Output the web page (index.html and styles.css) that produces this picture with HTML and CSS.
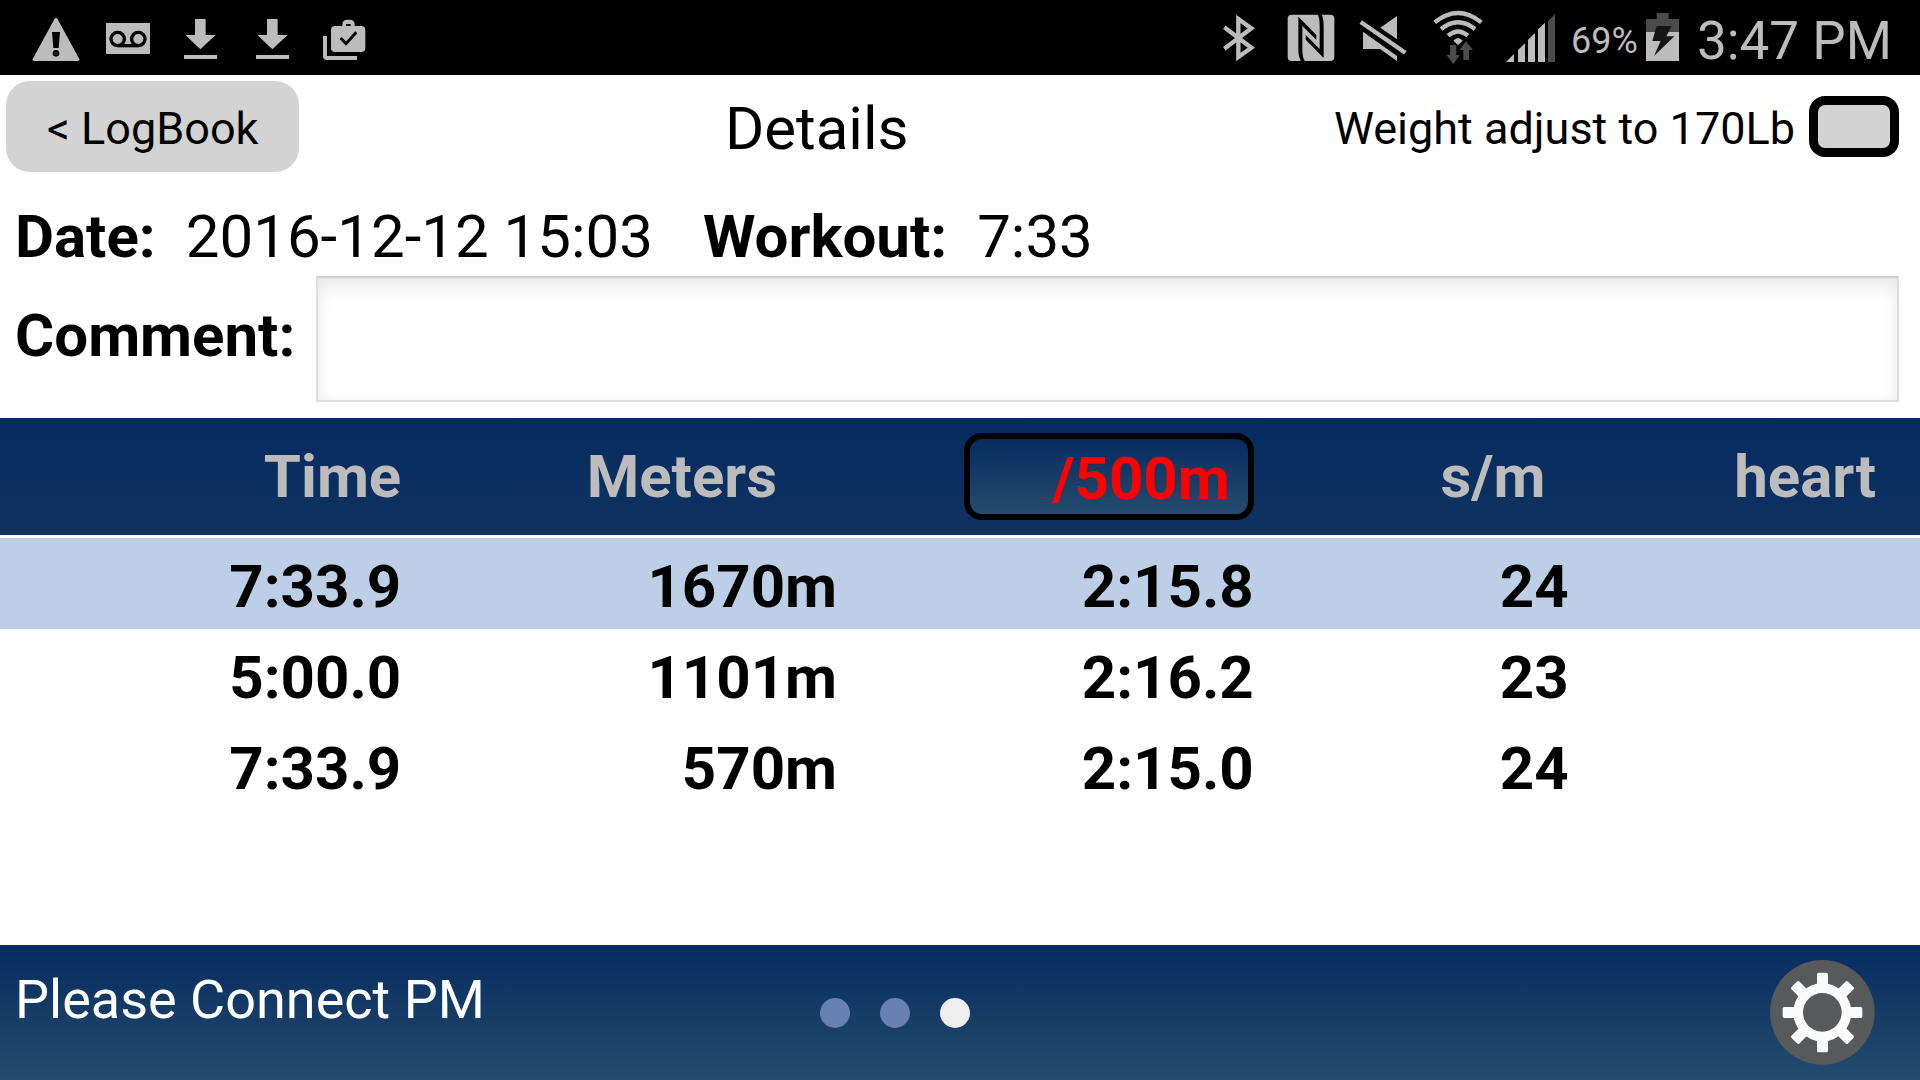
FILE: index.html
```html
<!DOCTYPE html>
<html lang="en">
<head>
<meta charset="utf-8">
<meta name="viewport" content="width=device-width, initial-scale=1">
<title>Details</title>
<link rel="stylesheet" href="styles.css">
</head>
<body>
<div class="status-bar">
  <div class="status-group">
    <svg class="status-icon" viewBox="60 0 216 225" aria-hidden="true">
      <path class="lit" d="M168 54q3 0 5 4l65 119q2 6-4 6H102q-6 0-4-6l65-119q2-4 5-4z"/>
      <path d="M156 96h24l-4 48h-16z"/><circle cx="168" cy="160" r="10"/>
    </svg>
    <svg class="status-icon" viewBox="276 0 216 225" aria-hidden="true">
      <path class="lit" d="M318 69h132v93H318z"/>
      <g fill="none" stroke="#000" stroke-width="10"><circle cx="353" cy="117" r="20"/><circle cx="415" cy="117" r="20"/><path d="M353 137h62"/></g>
    </svg>
    <svg class="status-icon" viewBox="492 0 216 225" aria-hidden="true">
      <path class="lit" d="M585 57h32v48h30l-46 43-45-43h29zM552 165h99v12h-99z"/>
    </svg>
    <svg class="status-icon" viewBox="708 0 216 225" aria-hidden="true">
      <path class="lit" d="M801 57h32v48h30l-46 43-45-43h29zM768 165h99v12h-99z"/>
    </svg>
    <svg class="status-icon" viewBox="924 0 216 225" aria-hidden="true">
      <rect class="lit" x="993" y="78" width="103" height="78" rx="12"/>
      <path class="lit" d="M1027 80v-6q0-15 15-15h7q15 0 15 15v6h-12v-8h-14v8z"/>
      <path class="lit" d="M969 108h12v60h90v12h-90q-12 0-12-12z"/>
      <path d="M1022 114l16 17 31-34" fill="none" stroke="#000" stroke-width="9"/>
    </svg>
  </div>
  <div class="status-group">
    <svg class="status-icon" viewBox="6 0 216 225" aria-hidden="true">
      <path d="M70 82l81 61-39 28V57l39 28-81 61" fill="none" stroke="#bcbcbc" stroke-width="13"/>
    </svg>
    <svg class="status-icon" viewBox="222 0 216 225" aria-hidden="true">
      <rect class="lit" x="260" y="44" width="140" height="139" rx="12"/>
      <path d="M292 50l54 55v15l-42-43v71q0 26 8 36h-12q-8-14-8-38zM368 174l-54-55v-15l42 43V76q0-26-8-36h12q8 14 8 38z"/>
    </svg>
    <svg class="status-icon" viewBox="438 0 216 225" aria-hidden="true">
      <path class="lit" d="M588 48v70l-50-35zM486 95l102 73v15l-51-36h-51z"/>
      <path d="M479 66l134 92" fill="none" stroke="#bcbcbc" stroke-width="13"/>
    </svg>
    <svg class="status-icon" viewBox="654 0 216 225" aria-hidden="true">
      <g fill="none" stroke="#bcbcbc" stroke-width="13"><path d="M701 67q70-56 140 0M720 87q51-41 102 0M741 107q30-25 60 0"/></g>
      <path class="lit" d="M757 122q14-16 28 0l-14 13z"/>
      <path d="M747 135h19v30h11l-20 27-21-27h11zM787 180v-30h-12l20-26 21 26h-12v30z" fill="#4b4b4b"/>
    </svg>
    <svg class="status-icon" viewBox="870 0 216 225" aria-hidden="true">
      <path class="lit" d="M915 186l24-24v24zM951 150l21-20v56h-21zM981 119l21-20v87h-21zM1011 88l21-20v118h-21z"/>
      <path d="M1041 63l21-21v144h-21z" fill="#4b4b4b"/>
    </svg>
    <span class="battery-level">69%</span>
    <svg class="battery-icon" viewBox="288 0 99 225" aria-hidden="true">
      <path d="M320 39h36v18h31v39h-99V57h32z" fill="#4b4b4b"/>
      <path class="lit" d="M288 96h99v87h-99z"/>
      <path d="M320 78h45l-16 31h24l-61 59 20-45h-25z" fill="#151515"/>
    </svg>
    <span class="clock">3:47 PM</span>
  </div>
</div>

<header class="title-bar">
  <button class="back-button" type="button">&lt; LogBook</button>
  <h1 class="title">Details</h1>
  <div class="weight-adjust">
    <label class="weight-label" for="weight">Weight adjust to 170Lb</label>
    <input class="weight-box" type="checkbox" id="weight">
  </div>
</header>

<main class="content">
  <dl class="summary">
    <div class="summary-item"><dt>Date:</dt><dd>2016-12-12 15:03</dd></div>
    <div class="summary-item"><dt>Workout:</dt><dd>7:33</dd></div>
  </dl>
  <div class="comment-row">
    <label class="comment-label" for="comment">Comment:</label>
    <input class="comment-input" type="text" id="comment">
  </div>

  <table class="splits">
    <colgroup>
      <col class="col-time"><col class="col-meters"><col class="col-pace"><col class="col-rate"><col>
    </colgroup>
    <thead>
      <tr>
        <th scope="col">Time</th>
        <th class="head-meters" scope="col">Meters</th>
        <th scope="col"><button class="pace-button" type="button">/500m</button></th>
        <th class="head-rate" scope="col">s/m</th>
        <th class="head-heart" scope="col">heart</th>
      </tr>
    </thead>
    <tbody>
      <tr class="total"><td>7:33.9</td><td>1670m</td><td>2:15.8</td><td>24</td><td></td></tr>
      <tr><td>5:00.0</td><td>1101m</td><td>2:16.2</td><td>23</td><td></td></tr>
      <tr><td>7:33.9</td><td>570m</td><td>2:15.0</td><td>24</td><td></td></tr>
    </tbody>
  </table>
</main>

<footer class="footer">
  <p class="connection">Please Connect PM</p>
  <div class="pager">
    <span class="dot"></span><span class="dot"></span><span class="dot dot-current"></span>
  </div>
  <button class="settings" type="button" aria-label="Settings">
    <svg class="gear" viewBox="0 0 315 315" aria-hidden="true">
      <circle cx="157" cy="157" r="157" fill="#58595b"/>
      <g fill="#fafafa">
        <g id="teeth"><rect x="141" y="38" width="33" height="239" rx="5"/><rect x="38" y="141" width="239" height="33" rx="5"/></g>
        <use href="#teeth" transform="rotate(45 157.500 157.500)"/>
        <circle cx="157" cy="157" r="87"/>
      </g>
      <circle cx="157" cy="157" r="58" fill="#58595b"/>
    </svg>
  </button>
</footer>
</body>
</html>
```
FILE: styles.css
```css
* { box-sizing: border-box; }

body {
  margin: 0;
  min-height: 100vh;
  display: flex;
  flex-direction: column;
  background: #fff;
  color: #000;
  font-family: Roboto, sans-serif;
}

button, input { font: inherit; color: inherit; }

/* Device status bar */
.status-bar {
  display: flex;
  justify-content: space-between;
  height: 75px;
  padding: 0 28px 0 20px;
  background: #000;
  color: #bcbcbc;
}
.status-group { display: flex; }
.status-icon { width: 72px; height: 75px; }
.lit { fill: #bcbcbc; }
.battery-level { margin: 0 8px; font-size: 36px; line-height: 82px; }
.battery-icon { width: 33px; height: 75px; }
.clock { margin-left: 18px; font-size: 53px; line-height: 82px; }

/* Title bar */
.title-bar {
  display: flex;
  justify-content: space-between;
  align-items: center;
  padding: 6px 21px 6px 6px;
  font-size: 45px;
}
.back-button {
  height: 91px;
  padding: 3px 41px 0;
  border: 0;
  border-radius: 24px;
  background: #d3d3d3;
}
.title { margin: 0; padding-top: 5px; font-size: 60px; font-weight: 400; line-height: 72px; }
.weight-adjust { display: flex; align-items: center; gap: 14px; }
.weight-label { padding-top: 3px; }
.weight-box {
  appearance: none;
  width: 90px;
  height: 61px;
  margin: 0;
  border: 9px solid #000;
  border-radius: 16px;
  background: #d3d3d3;
}
.weight-box:checked { background: #062b60; }

/* Workout summary */
.content { flex: 1; font-size: 60px; }
.summary { display: flex; gap: 50px; margin: 0; padding: 23px 15px 0; line-height: 72px; }
.summary-item { display: flex; gap: 30px; }
.summary dt, .comment-label { font-weight: 700; }
.summary dd { margin: 0; }
.comment-row {
  display: flex;
  align-items: center;
  gap: 21px;
  padding: 3px 21px 16px 15px;
}
.comment-label { line-height: 72px; padding-bottom: 6px; }
.comment-input {
  flex: 1;
  min-width: 0;
  height: 126px;
  padding: 0 16px;
  border: 2px solid #dedede;
  border-top-color: #cecece;
  box-shadow: inset 0 12px 20px -4px #e8e8e8, inset 0 0 12px #f2f2f2;
}

/* Splits table */
.splits {
  width: 100%;
  table-layout: fixed;
  border-collapse: separate;
  border-spacing: 0;
  font-weight: 700;
  text-align: right;
}
.col-time { width: 20.9%; }
.col-meters { width: 22.7%; }
.col-pace { width: 21.7%; }
.col-rate { width: 16.4%; }
.splits thead { background: linear-gradient(#062b60, #0f325f); color: #bcbcbc; }
.splits th { height: 120px; padding: 0; border-bottom: 3px solid #fff; }
.splits .head-meters { padding-right: 60px; }
.splits .head-rate { padding-right: 23px; }
.splits .head-heart { padding-right: 44px; }
.splits td { height: 91px; padding: 6px 0 0; line-height: 72px; }
.total { background: #bccfe6; }
.pace-button {
  display: block;
  width: 290px;
  height: 87px;
  margin-left: auto;
  padding: 4px 18px 0;
  border: 6px solid #000;
  border-radius: 18px;
  background: linear-gradient(#062b60, #254c6d);
  color: #f00;
  font-weight: 700;
  line-height: 69px;
  text-align: right;
}

/* Footer */
.footer {
  display: grid;
  grid-template-columns: 8fr auto 9fr;
  align-items: center;
  height: 135px;
  padding: 0 45px 0 15px;
  background: linear-gradient(#062b60, #254c6d);
  color: #fff;
}
.connection { margin: 0; padding-bottom: 26px; font-size: 54px; line-height: 64px; white-space: nowrap; }
.pager { display: flex; gap: 30px; }
.dot { width: 30px; height: 30px; border-radius: 50%; background: #6681b2; }
.dot-current { background: #eee; }
.settings { justify-self: end; padding: 0; border: 0; border-radius: 50%; background: none; }
.gear { display: block; width: 105px; height: 105px; }
```
